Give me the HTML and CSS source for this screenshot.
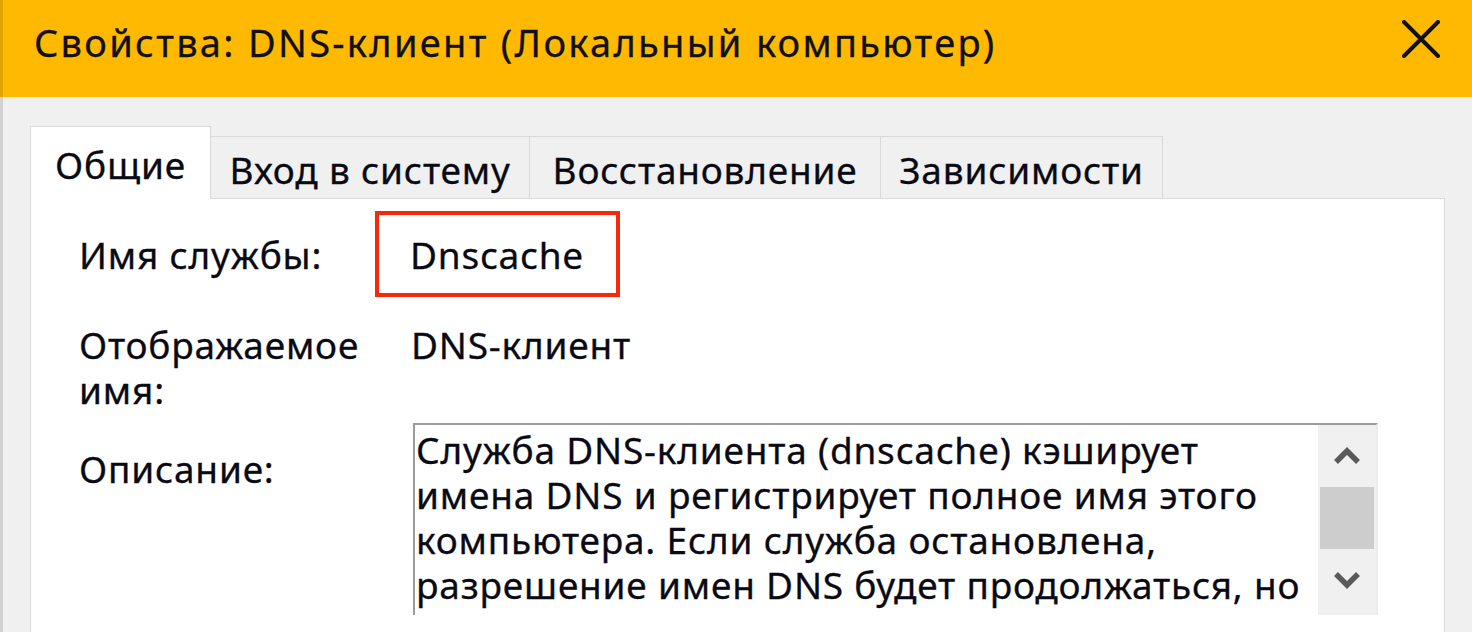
FILE: index.html
```html
<!DOCTYPE html>
<html lang="ru">
<head>
<meta charset="utf-8">
<title>Свойства: DNS-клиент</title>
<link rel="stylesheet" href="styles.css">
</head>
<body>
<div class="window">
  <div class="titlebar">
    <span class="title">Свойства: DNS-клиент (Локальный компьютер)</span>
    <svg class="close" width="38" height="38" viewBox="0 0 38 38" aria-label="Закрыть">
      <path d="M2 2 L36 36 M36 2 L2 36" stroke="#111" stroke-width="4" stroke-linecap="round" fill="none"/>
    </svg>
  </div>
  <div class="client">
    <div class="tabs">
      <div class="tab active t1">Общие</div>
      <div class="tab t2">Вход в систему</div>
      <div class="tab t3">Восстановление</div>
      <div class="tab t4">Зависимости</div>
    </div>
    <div class="panel">
      <div class="row row-name">
        <div class="label">Имя службы:</div>
        <div class="value"><span class="highlight">Dnscache</span></div>
      </div>
      <div class="row row-display">
        <div class="label"><div class="line">Отображаемое</div><div class="line">имя:</div></div>
        <div class="value">DNS-клиент</div>
      </div>
      <div class="row row-desc">
        <div class="label label-desc">Описание:</div>
        <div class="textbox">
          <div class="textbox-text"><div class="line">Служба DNS-клиента (dnscache) кэширует</div><div class="line">имена DNS и регистрирует полное имя этого</div><div class="line">компьютера. Если служба остановлена,</div><div class="line">разрешение имен DNS будет продолжаться, но</div></div>
          <div class="scrollbar">
            <div class="sb-btn">
              <svg width="28" height="18" viewBox="0 0 28 18"><path d="M3 15 L14 4 L25 15" stroke="#5a5a5a" stroke-width="5.5" fill="none" stroke-linejoin="miter"/></svg>
            </div>
            <div class="sb-thumb"></div>
            <div class="sb-btn">
              <svg width="28" height="18" viewBox="0 0 28 18"><path d="M3 3 L14 14 L25 3" stroke="#5a5a5a" stroke-width="5.5" fill="none" stroke-linejoin="miter"/></svg>
            </div>
          </div>
        </div>
      </div>
    </div>
  </div>
</div>
</body>
</html>
```
FILE: styles.css
```css
html, body {
  margin: 0;
  padding: 0;
  height: 100%;
  overflow: hidden;
}
body {
  background: #f0f0f0;
  font-family: "Noto Sans", "Open Sans", sans-serif;
  font-size: 37px;
  line-height: 45px;
  letter-spacing: 0.8px;
  color: #0a0a14;
  -webkit-text-stroke: 0.3px #0a0a14;
}
.window {
  height: 632px;
  display: flex;
  flex-direction: column;
}
.titlebar {
  height: 97px;
  box-sizing: border-box;
  background: #ffb900;
  border-left: 3px solid #e0a400;
  display: flex;
  align-items: flex-start;
  justify-content: space-between;
  padding: 20px 32px 0 31px;
}
.title {
  color: #111;
  font-size: 38px;
  letter-spacing: 2.3px;
  -webkit-text-stroke: 0.3px #111;
}
.close {
  flex: none;
}
.client {
  flex: 1;
  border-left: 3px solid #d2d2d2;
  padding: 28px 27px 0 27px;
  display: flex;
  flex-direction: column;
}
.tabs {
  display: flex;
  align-items: flex-end;
  height: 73px;
}
.tab {
  box-sizing: border-box;
  text-align: center;
  background: #f0f0f0;
  border: 1px solid #d9d9d9;
  border-left: none;
  border-bottom: none;
  height: 62px;
  padding-top: 10px;
}
.tab.active {
  background: #fff;
  border-left: 1px solid #d9d9d9;
  height: 73px;
  padding-top: 15px;
  margin-bottom: -1px;
  position: relative;
  z-index: 1;
}
.t1 { width: 181px; }
.t2 { width: 319px; }
.t3 { width: 351px; }
.t4 { width: 282px; }
.panel {
  flex: 1;
  background: #fff;
  border: 1px solid #d9d9d9;
  border-bottom: none;
  padding: 12px 0 0 48px;
}
.row {
  display: grid;
  grid-template-columns: 332px 1fr;
}
.row-name {
  align-items: center;
}
.line {
  height: 45px;
}
.highlight {
  display: flex;
  align-items: center;
  box-sizing: border-box;
  width: 245px;
  height: 86px;
  margin-left: -36px;
  padding-left: 31px;
  border: 4px solid #f8280c;
}
.row-display {
  margin-top: 25px;
}
.row-desc {
  margin-top: 11px;
}
.label-desc {
  margin-top: 23px;
}
.textbox {
  margin-left: 2px;
  width: 965px;
  height: 192px;
  box-sizing: border-box;
  border-top: 2px solid #9c9c9c;
  border-left: 2px solid #9c9c9c;
  border-right: 2px solid #ececec;
  display: flex;
  overflow: hidden;
}
.textbox-text {
  flex: 1;
  padding: 2px 0 0 1px;
  white-space: nowrap;
  overflow: hidden;
}
.scrollbar {
  flex: none;
  width: 58px;
  background: #f0f0f0;
  display: flex;
  flex-direction: column;
}
.sb-btn {
  height: 62px;
  display: flex;
  align-items: center;
  justify-content: center;
}
.sb-thumb {
  height: 62px;
  margin: 0 2px;
  background: #cdcdcd;
}
```
